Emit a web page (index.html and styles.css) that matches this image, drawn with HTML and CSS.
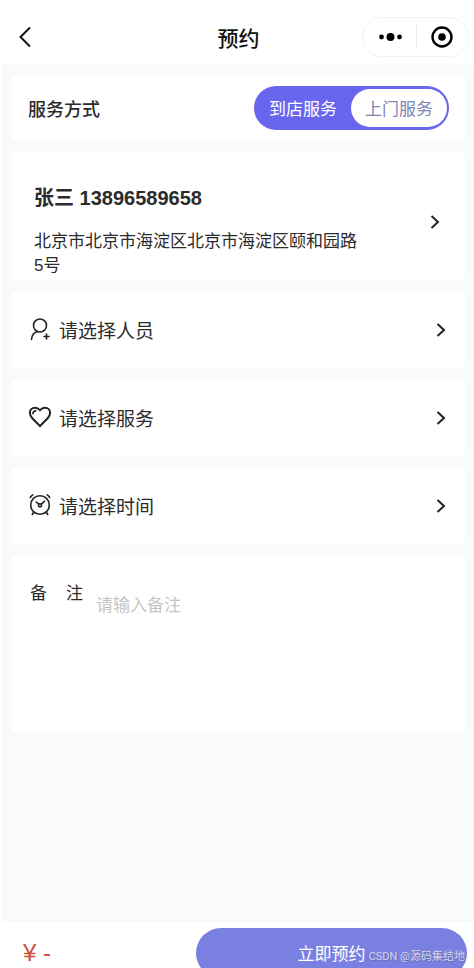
FILE: index.html
```html
<!DOCTYPE html>
<html lang="zh-CN">
<head>
  <meta charset="utf-8">
  <meta name="viewport" content="width=device-width, initial-scale=1">
  <title>预约</title>
  <link rel="stylesheet" href="styles.css">
</head>
<body>
  <header class="navbar">
    <button class="back" type="button" aria-label="返回">
      <svg width="14" height="22" viewBox="0 0 14 22"><path d="M12 1.500 2.500 11 12 20.500"/></svg>
    </button>
    <h1 class="title">预约</h1>
    <div class="capsule">
      <button type="button" aria-label="更多">
        <svg width="26" height="24" viewBox="0 0 26 24"><circle cx="4.500" cy="12" r="2.400"/><circle cx="13.500" cy="12" r="4"/><circle cx="22.500" cy="12" r="2.400"/></svg>
      </button>
      <span class="divider"></span>
      <button type="button" aria-label="关闭">
        <svg width="24" height="24" viewBox="0 0 24 24"><circle class="ring" cx="12" cy="12" r="9.500"/><circle cx="12" cy="12" r="3.800"/></svg>
      </button>
    </div>
  </header>

  <main class="content">
    <section class="card mode">
      <h2 class="mode-label">服务方式</h2>
      <div class="switch">
        <button class="option" type="button" aria-pressed="false">到店服务</button>
        <button class="option selected" type="button" aria-pressed="true">上门服务</button>
      </div>
    </section>

    <a class="card address" href="#address">
      <span class="address-body">
        <strong class="contact">张三 13896589658</strong>
        <span class="place">北京市北京市海淀区北京市海淀区颐和园路5号</span>
      </span>
      <svg class="chevron" width="10" height="16" viewBox="0 0 10 16"><path d="M1.500 2 8 8 1.500 14"/></svg>
    </a>

    <a class="card row" href="#staff">
      <svg class="icon" width="24" height="24" viewBox="0 0 24 24"><circle cx="12" cy="7.500" r="6.500"/><path d="M9.500 13.500C6 14.500 3.800 17.500 3.500 21.500M18.500 16v5M16 18.500h5"/></svg>
      <span class="row-text">请选择人员</span>
      <svg class="chevron" width="10" height="16" viewBox="0 0 10 16"><path d="M1.500 2 8 8 1.500 14"/></svg>
    </a>
    <a class="card row" href="#service">
      <svg class="icon" width="24" height="24" viewBox="0 0 24 24"><path class="heavy" d="M12 4.200C10.500 2.500 8.800 1.800 7 1.800 4 1.800 1.900 4.100 1.900 7c0 2.400 1 3.900 2.600 5.500L12 20l7.500-7.500c1.600-1.600 2.600-3.100 2.600-5.500 0-2.900-2.100-5.200-5.100-5.200-1.800 0-3.500.7-5 2.400Z"/><path d="M4.900 7.600C5.100 6 6.200 5 7.700 4.900"/></svg>
      <span class="row-text">请选择服务</span>
      <svg class="chevron" width="10" height="16" viewBox="0 0 10 16"><path d="M1.500 2 8 8 1.500 14"/></svg>
    </a>
    <a class="card row" href="#time">
      <svg class="icon" width="24" height="24" viewBox="0 0 24 24"><circle cx="12" cy="11" r="9.300"/><path d="M8.200 8 10.800 10.200M13.200 10.200 16.500 7.300M2.300 3.500C3 2.200 3.700 1.500 4.700.9M21.700 3.500C21 2.200 20.300 1.500 19.300.9M5.500 18.500 4.300 20.500M18.500 18.500 19.700 20.500"/><circle cx="12" cy="11.300" r="1.600"/></svg>
      <span class="row-text">请选择时间</span>
      <svg class="chevron" width="10" height="16" viewBox="0 0 10 16"><path d="M1.500 2 8 8 1.500 14"/></svg>
    </a>

    <section class="card remark">
      <label class="remark-label" for="remark"><span>备</span><span>注</span></label>
      <textarea class="remark-input" id="remark" placeholder="请输入备注"></textarea>
    </section>
  </main>

  <footer class="footer">
    <span class="price">¥ -</span>
    <button class="submit" type="button">立即预约</button>
    <span class="watermark">CSDN @源码集结地</span>
  </footer>
</body>
</html>
```

FILE: styles.css
```css
* {
  box-sizing: border-box;
}

body {
  margin: 0;
  height: 100vh;
  display: flex;
  flex-direction: column;
  overflow: hidden;
  background: #fff;
  color: #2b2b2b;
  font-family: "Noto Sans CJK SC", sans-serif;
  font-size: 17px;
  line-height: 24px;
}

button {
  margin: 0;
  padding: 0;
  border: 0;
  background: none;
  color: inherit;
  font: inherit;
}

a {
  color: inherit;
  text-decoration: none;
}

svg {
  display: block;
  flex: none;
}

.navbar {
  flex: none;
  height: 64px;
  padding: 10px 5px 0 8px;
  display: grid;
  grid-template-columns: 1fr auto 1fr;
  align-items: center;
}

.back {
  justify-self: start;
  margin-left: 10px;
}

.back path {
  fill: none;
  stroke: #111;
  stroke-width: 2;
}

.title {
  margin: 0;
  color: #111;
  font-size: 21px;
  font-weight: 500;
}

.capsule {
  justify-self: end;
  width: 107px;
  height: 40px;
  padding: 0 14px;
  display: flex;
  align-items: center;
  justify-content: space-between;
  border: 1px solid #f3f3f3;
  border-radius: 20px;
}

.capsule .ring {
  fill: none;
  stroke: #000;
  stroke-width: 2.400;
}

.divider {
  width: 1px;
  height: 24px;
  background: #e8e8e8;
}

.content {
  flex: 1;
  min-height: 0;
  margin-left: 2px;
  padding: 12px 9px 12px 10px;
  display: flex;
  flex-direction: column;
  gap: 12px;
  background: #fafafa;
  border-radius: 4px;
}

.card {
  flex: none;
  display: flex;
  align-items: center;
  background: #fff;
  border-radius: 4px;
}

.mode {
  height: 64px;
  padding: 0 16px;
  justify-content: space-between;
}

.mode-label {
  margin: 0;
  font-size: 18px;
  font-weight: 500;
}

.switch {
  height: 44px;
  padding: 3px 2px 3px 1px;
  display: flex;
  background: #6865ee;
  border-radius: 22px;
}

.option {
  width: 96px;
  border-radius: 19px;
  color: #fff;
}

.option.selected {
  background: #fff;
  color: #8085b5;
}

.address {
  height: 128px;
  padding: 18px 25px 0 22px;
  align-items: flex-start;
  justify-content: space-between;
  font-family: "Liberation Sans", "Noto Sans CJK SC", sans-serif;
}

.address-body {
  max-width: 332px;
  padding-top: 16px;
}

.contact,
.place {
  display: block;
}

.contact {
  margin-bottom: 20px;
  font-size: 20px;
  font-weight: 600;
}

.address .chevron {
  margin-top: 44px;
}

.chevron path {
  fill: none;
  stroke: #222;
  stroke-width: 2;
}

.row {
  height: 76px;
  padding: 0 19px 0 16px;
}

.icon {
  fill: none;
  stroke: #222;
  stroke-width: 1.600;
  stroke-linecap: round;
}

.icon .heavy {
  stroke-width: 2;
}

.row-text {
  flex: 1;
  padding-left: 7px;
  font-size: 19px;
}

.remark {
  height: 177px;
  padding: 24px 18px;
  align-items: stretch;
}

.remark-label {
  width: 53px;
  display: flex;
  justify-content: space-between;
}

.remark-input {
  flex: 1;
  margin: 0 0 0 13px;
  padding: 12px 0 0;
  border: 0;
  outline: 0;
  resize: none;
  background: none;
  color: inherit;
  font: inherit;
}

.remark-input::placeholder {
  color: #c4c4c4;
}

.footer {
  position: relative;
  flex: none;
  height: 46px;
  padding: 6px 7px 0 23px;
  display: flex;
  align-items: flex-start;
  justify-content: space-between;
}

.price {
  padding-top: 13px;
  color: #c8503c;
  font-family: "Liberation Sans", sans-serif;
  font-size: 24px;
  line-height: 24px;
}

.submit {
  width: 61%;
  height: 50px;
  border-radius: 25px;
  background: #7a80e2;
  color: #fff;
}

.watermark {
  position: absolute;
  right: 9px;
  bottom: 2px;
  color: #d3d5ee;
  font-family: Roboto, "Noto Sans CJK SC", sans-serif;
  font-size: 11px;
  line-height: 18px;
  text-shadow: 1px 1px 1px #666a9c;
}
```
